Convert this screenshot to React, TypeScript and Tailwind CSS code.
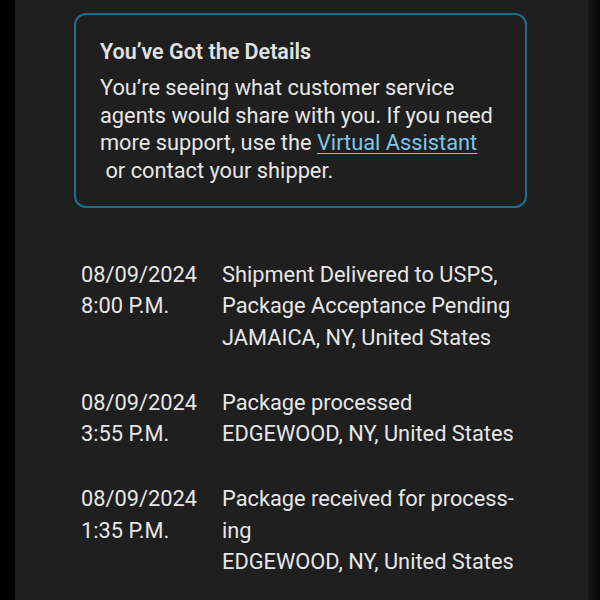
const events = [
  {
    date: '08/09/2024',
    time: '8:00 P.M.',
    lines: ['Shipment Delivered to USPS,', 'Package Acceptance Pending', 'JAMAICA, NY, United States'],
  },
  {
    date: '08/09/2024',
    time: '3:55 P.M.',
    lines: ['Package processed', 'EDGEWOOD, NY, United States'],
  },
  {
    date: '08/09/2024',
    time: '1:35 P.M.',
    lines: ['Package received for process-', 'ing', 'EDGEWOOD, NY, United States'],
  },
]

export default function App() {
  return (
    <div className="flex h-[600px] w-[600px] overflow-hidden bg-black font-['Roboto',_sans-serif] text-[#e6e6e6]">
      <div className="w-[15px] shrink-0 bg-black" />

      <main className="flex-1 bg-[#1f1f1f] pt-[13px]">
        {/* Info card */}
        <section className="ml-[59px] w-[453px] rounded-[12px] border-2 border-[#1d6e93] pl-[24px] pr-3 pt-[23px] pb-[22px]">
          <h2 className="text-[21.5px] font-semibold leading-[28px] text-[#e2e2e2]">You’ve Got the Details</h2>
          <p className="mt-2 text-[21.8px] leading-[27.5px]">
            You’re seeing what customer service
            <br />
            agents would share with you. If you need
            <br />
            more support, use the{' '}
            <a href="#" className="text-[#7cc6ea] underline decoration-1 underline-offset-[3px]">
              Virtual Assistant
            </a>
            <br />
            &nbsp;or contact your shipper.
          </p>
        </section>

        {/* Tracking history */}
        <ul className="ml-[66px] mt-[51px] flex flex-col gap-[34px] text-[21.8px] leading-[31.3px]">
          {events.map((e, i) => (
            <li key={i} className="flex">
              <div className="w-[141px] shrink-0">
                <div>{e.date}</div>
                <div>{e.time}</div>
              </div>
              <div>
                {e.lines.map((l, j) => (
                  <div key={j} className="whitespace-nowrap">{l}</div>
                ))}
              </div>
            </li>
          ))}
        </ul>
      </main>

      <div className="w-[12px] shrink-0 bg-gradient-to-r from-[#171717] to-[#080808]" />
    </div>
  )
}
